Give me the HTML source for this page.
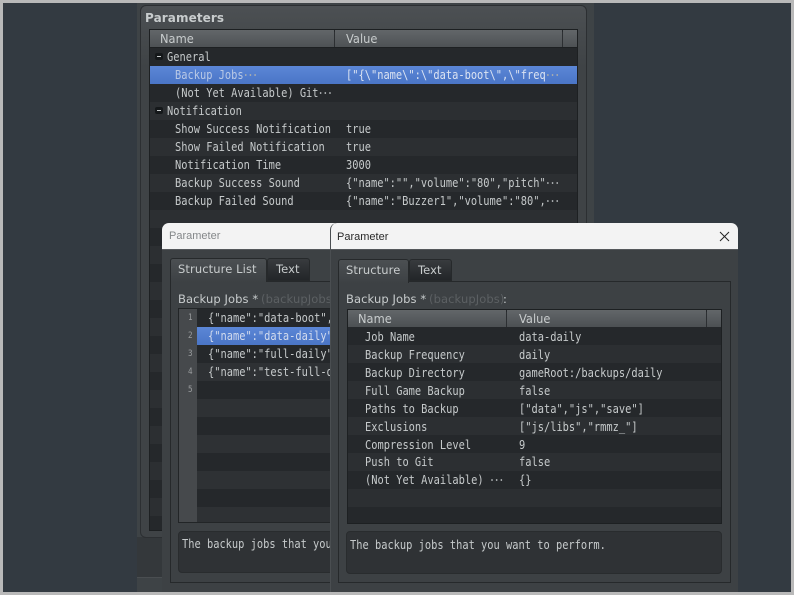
<!DOCTYPE html>
<html><head><meta charset="utf-8">
<style>
html,body{margin:0;padding:0;background:#b9b9b9}
#f{position:relative;width:794px;height:595px;overflow:hidden;background:#b9b9b9;font-family:"DejaVu Sans",sans-serif;filter:blur(.3px)}
#f div{position:absolute;box-sizing:border-box}
.m{position:absolute;font:12.3px/18px "DejaVu Sans Mono",monospace;color:#c6cacb;white-space:pre;transform:scaleX(.843);transform-origin:0 0;height:18px}
.m b{font:14.8px/0 "Noto Sans CJK JP",sans-serif;color:#a9adaf;position:relative;top:-3px}
.s{position:absolute;font:11.5px/16px "DejaVu Sans",sans-serif;color:#c8cccd;white-space:pre;letter-spacing:.1px}
.h{position:absolute;font:12.3px/16px "DejaVu Sans",sans-serif;color:#c8cccd;white-space:pre;transform:scaleX(.93);transform-origin:0 0}
.t{position:absolute;font:11px/16px "Liberation Sans",sans-serif;white-space:pre}
.g{color:#5c6063}
.hd{background:linear-gradient(#626669,#4c5053);height:18px}
.minus{width:8px;height:7px;background:#15181a;border-radius:2px}
.minus:after{content:"";position:absolute;left:2px;top:3px;width:4px;height:1px;background:#c6cacb}
</style></head><body>
<div id="f">
<div style="left:3px;top:3px;width:788px;height:589px;background:#333a41"></div>
<div style="left:137px;top:3px;width:457px;height:589px;background:#3e4346"></div>
<div style="left:137px;top:537px;width:25px;height:40px;background:#34383b"></div>
<div style="left:137px;top:577px;width:25px;height:1px;background:#4a4e51"></div>

<!-- Parameters panel -->
<div style="left:140px;top:5px;width:447px;height:533px;border:1px solid #2c2f32;border-radius:6px;background:linear-gradient(#4c5053,#3f4346 60px)"></div>
<div class="s" style="left:145px;top:10px;font-weight:bold;font-size:12px;color:#c8cccd">Parameters</div>
<div style="left:149px;top:29px;width:429px;height:502px;background:repeating-linear-gradient(#25282b 0 18px,#2c2f32 18px 36px) 0 19px;border:1px solid #1d2022;background-origin:border-box"></div>
<div class="hd" style="left:150px;top:30px;width:184px"></div>
<div class="hd" style="left:335px;top:30px;width:227px"></div>
<div class="hd" style="left:563px;top:30px;width:14px"></div>
<div style="left:150px;top:47px;width:427px;height:1px;background:#1d2022"></div>
<div class="h" style="left:160px;top:31px">Name</div>
<div class="h" style="left:346px;top:31px">Value</div>
<div style="left:150px;top:48px;width:427px;height:18px;background:#25282b"></div>
<div style="left:150px;top:66px;width:427px;height:18px;background:linear-gradient(#5b86d6,#4a75c6)"></div>
<div class="minus" style="left:155px;top:53px"></div>
<div class="minus" style="left:155px;top:107px"></div>
<div class="m" style="left:167px;top:48px">General</div>
<div class="m" style="left:175px;top:66px;color:#b9c9e6">Backup Jobs<b>⋯</b></div>
<div class="m" style="left:346px;top:66px;color:#dbe3f2">["{\"name\":\"data-boot\",\"freq<b>⋯</b></div>
<div class="m" style="left:175px;top:84px">(Not Yet Available) Git<b>⋯</b></div>
<div class="m" style="left:167px;top:102px">Notification</div>
<div class="m" style="left:175px;top:120px">Show Success Notification</div>
<div class="m" style="left:346px;top:120px">true</div>
<div class="m" style="left:175px;top:138px">Show Failed Notification</div>
<div class="m" style="left:346px;top:138px">true</div>
<div class="m" style="left:175px;top:156px">Notification Time</div>
<div class="m" style="left:346px;top:156px">3000</div>
<div class="m" style="left:175px;top:174px">Backup Success Sound</div>
<div class="m" style="left:346px;top:174px">{"name":"","volume":"80","pitch"<b>⋯</b></div>
<div class="m" style="left:175px;top:192px">Backup Failed Sound</div>
<div class="m" style="left:346px;top:192px">{"name":"Buzzer1","volume":"80",<b>⋯</b></div>

<!-- Dialog 1 -->
<div style="left:162px;top:223px;width:410px;height:369px;background:#3d4144;border-radius:7px 7px 0 0;overflow:hidden">
  <div style="left:0;top:0;width:100%;height:27px;background:#f3f3f3;border-bottom:1px solid #55585b"></div>
</div>
<div class="t" style="left:169px;top:228px;color:#85888a">Parameter</div>
<div style="left:170px;top:281px;width:400px;height:302px;border:1px solid #26292b;background:#3d4144"></div>
<div style="left:170px;top:258px;width:97px;height:24px;border:1px solid #26292b;border-bottom:0;border-radius:3px 3px 0 0;background:linear-gradient(#4b4f52,#3d4144)"></div>
<div style="left:267px;top:258px;width:43px;height:23px;border:1px solid #26292b;border-radius:3px 3px 0 0;background:linear-gradient(#383b3e,#222528)"></div>
<div class="s" style="left:178px;top:261px">Structure List</div>
<div class="s" style="left:276px;top:261px">Text</div>
<div class="s" style="left:178px;top:291px">Backup Jobs *</div>
<div class="s g" style="left:261px;top:291px">(backupJobs</div>
<div style="left:178px;top:308px;width:160px;height:215px;border:1px solid #222527;background:repeating-linear-gradient(#25282b 0 18px,#2e3134 18px 36px)"></div>
<div style="left:179px;top:309px;width:18px;height:213px;background:#46494c"></div>
<div style="left:197px;top:327px;width:140px;height:18px;background:linear-gradient(#5b86d6,#4a75c6)"></div>
<div class="m" style="left:188px;top:309px;font-size:9px;color:#9a9d9f">1</div>
<div class="m" style="left:188px;top:327px;font-size:9px;color:#9a9d9f">2</div>
<div class="m" style="left:188px;top:345px;font-size:9px;color:#9a9d9f">3</div>
<div class="m" style="left:188px;top:363px;font-size:9px;color:#9a9d9f">4</div>
<div class="m" style="left:188px;top:381px;font-size:9px;color:#9a9d9f">5</div>
<div class="m" style="left:208px;top:309px">{"name":"data-boot",</div>
<div class="m" style="left:208px;top:327px;color:#d3dcee">{"name":"data-daily"</div>
<div class="m" style="left:208px;top:345px">{"name":"full-daily"</div>
<div class="m" style="left:208px;top:363px">{"name":"test-full-d</div>
<div style="left:178px;top:531px;width:160px;height:42px;border:1px solid #292c2e;border-radius:4px;background:#2f3235"></div>
<div class="m" style="left:182px;top:535px">The backup jobs that you</div>

<!-- Dialog 2 -->
<div style="left:330px;top:223px;width:408px;height:369px;background:#3d4144;border-radius:7px 7px 0 0;overflow:hidden;border-left:1px solid #4a4e51">
  <div style="left:-1px;top:0;width:409px;height:27px;background:#f3f3f3;border-bottom:1px solid #55585b;border-top-left-radius:7px"></div>
</div>
<div class="t" style="left:337px;top:229px;color:#2a2a2a">Parameter</div>
<svg style="position:absolute;left:719px;top:231px" width="11" height="11" viewBox="0 0 11 11"><path d="M1 1L10 10M10 1L1 10" stroke="#222" stroke-width="1" fill="none"/></svg>
<div style="left:338px;top:281px;width:393px;height:302px;border:1px solid #26292b;background:#3d4144"></div>
<div style="left:338px;top:259px;width:71px;height:24px;border:1px solid #26292b;border-bottom:0;border-radius:3px 3px 0 0;background:linear-gradient(#4b4f52,#3d4144)"></div>
<div style="left:409px;top:259px;width:43px;height:22px;border:1px solid #26292b;border-radius:3px 3px 0 0;background:linear-gradient(#383b3e,#222528)"></div>
<div class="s" style="left:346px;top:262px">Structure</div>
<div class="s" style="left:418px;top:262px">Text</div>
<div class="s" style="left:346px;top:291px">Backup Jobs *</div>
<div class="s g" style="left:429px;top:291px">(backupJobs)</div>
<div class="s" style="left:503px;top:291px">:</div>
<div style="left:347px;top:309px;width:375px;height:215px;border:1px solid #1d2022;background:repeating-linear-gradient(#25282b 0 18px,#2c2f32 18px 36px) 0 17px"></div>
<div class="hd" style="left:348px;top:310px;width:158px;height:17px"></div>
<div class="hd" style="left:507px;top:310px;width:199px;height:17px"></div>
<div class="hd" style="left:707px;top:310px;width:14px;height:17px"></div>
<div class="h" style="left:358px;top:311px">Name</div>
<div class="h" style="left:519px;top:311px">Value</div>
<div class="m" style="left:365px;top:328px">Job Name</div><div class="m" style="left:519px;top:328px">data-daily</div>
<div class="m" style="left:365px;top:346px">Backup Frequency</div><div class="m" style="left:519px;top:346px">daily</div>
<div class="m" style="left:365px;top:364px">Backup Directory</div><div class="m" style="left:519px;top:364px">gameRoot:/backups/daily</div>
<div class="m" style="left:365px;top:382px">Full Game Backup</div><div class="m" style="left:519px;top:382px">false</div>
<div class="m" style="left:365px;top:400px">Paths to Backup</div><div class="m" style="left:519px;top:400px">["data","js","save"]</div>
<div class="m" style="left:365px;top:418px">Exclusions</div><div class="m" style="left:519px;top:418px">["js/libs","rmmz_"]</div>
<div class="m" style="left:365px;top:436px">Compression Level</div><div class="m" style="left:519px;top:436px">9</div>
<div class="m" style="left:365px;top:453px">Push to Git</div><div class="m" style="left:519px;top:453px">false</div>
<div class="m" style="left:365px;top:471px">(Not Yet Available) <b>⋯</b></div><div class="m" style="left:519px;top:471px">{}</div>
<div style="left:346px;top:531px;width:376px;height:43px;border:1px solid #292c2e;border-radius:4px;background:#2f3235"></div>
<div class="m" style="left:350px;top:536px">The backup jobs that you want to perform.</div>
</div>
</body></html>
